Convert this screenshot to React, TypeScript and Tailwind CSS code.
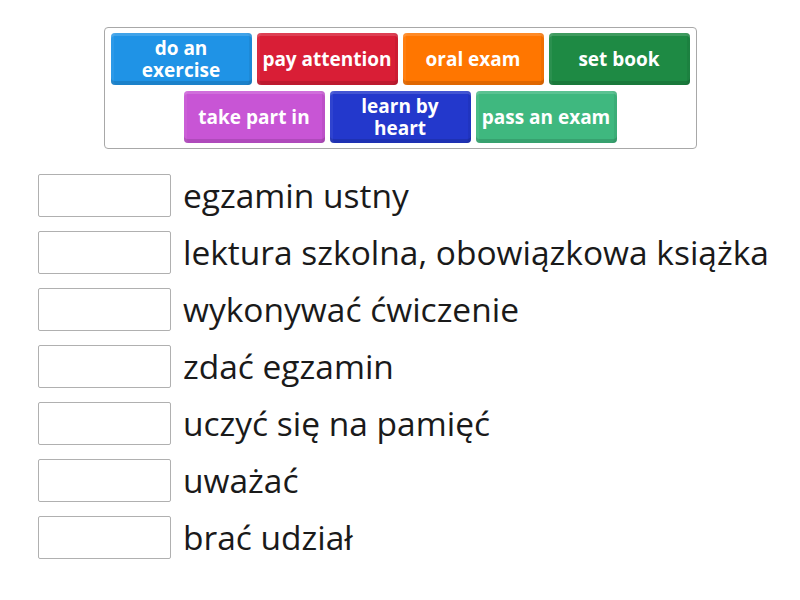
import React from "react";

type Tile = { id: number; label: string; bg: string };

const tiles: Tile[] = [
  { id: 1, label: "do an exercise", bg: "bg-[#1f93e6]" },
  { id: 2, label: "pay attention", bg: "bg-[#d91e36]" },
  { id: 3, label: "oral exam", bg: "bg-[#ff7600]" },
  { id: 4, label: "set book", bg: "bg-[#1e8a44]" },
  { id: 5, label: "take part in", bg: "bg-[#c855d5]" },
  { id: 6, label: "learn by heart", bg: "bg-[#2338cc]" },
  { id: 7, label: "pass an exam", bg: "bg-[#3fb87f]" },
];

const answers = [
  "egzamin ustny",
  "lektura szkolna, obowiązkowa książka",
  "wykonywać ćwiczenie",
  "zdać egzamin",
  "uczyć się na pamięć",
  "uważać",
  "brać udział",
];

const App = () => {
  return (
    <div className="w-[800px] h-[600px] bg-white font-['Open_Sans',sans-serif] pt-[27px]">
      <div className="mx-auto w-[593px] border border-[#a8a8a8] rounded-[4px] px-[5px] py-[5px]">
        <div className="flex flex-wrap justify-center gap-x-[5px] gap-y-[6px]">
          {tiles.map((tile) => (
            <div
              key={tile.id}
              className={`${tile.bg} w-[141px] h-[52px] rounded-[4px] flex items-center justify-center text-center px-[4px] text-white font-bold text-[19px] leading-[22px] shadow-[inset_0_-4px_0_rgba(0,0,0,0.12),inset_0_3px_0_rgba(255,255,255,0.15),inset_3px_0_0_rgba(255,255,255,0.06),inset_-3px_0_0_rgba(0,0,0,0.06)]`}
            >
              {tile.label}
            </div>
          ))}
        </div>
      </div>
      <div className="mt-[25px] pl-[38px] flex flex-col gap-[14px]">
        {answers.map((text, i) => (
          <div key={i} className="flex items-center">
            <div className="w-[133px] h-[43px] border border-[#b0b0b0] rounded-[2px] bg-white shrink-0" />
            <span className="ml-[12px] text-[33.5px] text-[#1a1a1a] whitespace-nowrap leading-none">
              {text}
            </span>
          </div>
        ))}
      </div>
    </div>
  );
};

export default App;
